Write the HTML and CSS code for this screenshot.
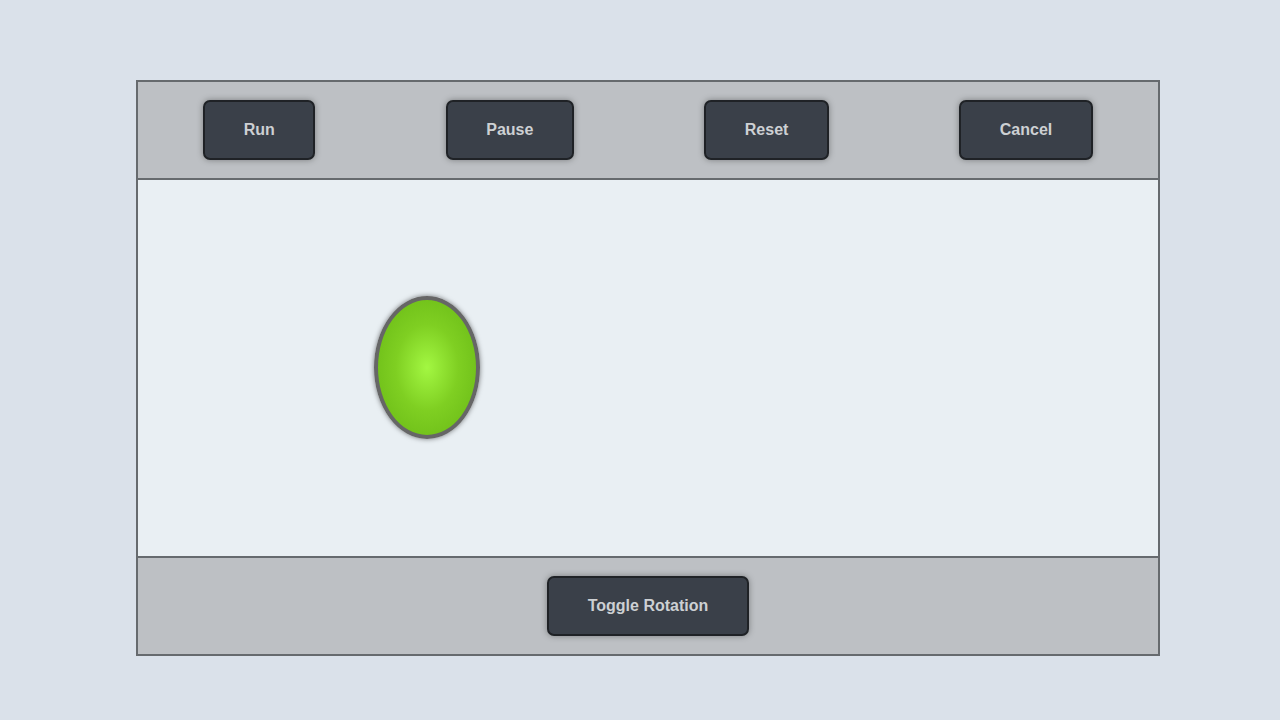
FILE: index.html
```html
<!DOCTYPE html>
<html>
<head>
<meta charset="utf-8">
<link rel="stylesheet" href="styles.css">
</head>
<body>
<div class="frame">
  <div class="bar top">
    <button class="btn">Run</button>
    <button class="btn">Pause</button>
    <button class="btn">Reset</button>
    <button class="btn">Cancel</button>
  </div>
  <div class="stage">
    <div class="ball"></div>
  </div>
  <div class="bar bottom">
    <button class="btn">Toggle Rotation</button>
  </div>
</div>
</body>
</html>
```
FILE: styles.css
```css
html, body {
  margin: 0;
  padding: 0;
}
body {
  background: #dae1ea;
  width: 1280px;
  height: 720px;
  padding-top: 80px;
  box-sizing: border-box;
  font-family: "Liberation Sans", Arial, sans-serif;
}
.frame {
  width: 1024px;
  margin: 0 0 0 136px;
  border: 2px solid #666a6e;
  box-sizing: border-box;
  display: flex;
  flex-direction: column;
}
.bar {
  height: 96px;
  background: #bdc0c4;
  display: flex;
  align-items: center;
}
.top {
  justify-content: space-around;
  border-bottom: 2px solid #666a6e;
}
.bottom {
  justify-content: center;
  border-top: 2px solid #666a6e;
}
.btn {
  height: 60px;
  padding: 0 38.5px;
  background: #3a4049;
  color: #cdd0d3;
  border: 2px solid #1f2226;
  border-radius: 7px;
  font-family: "Liberation Sans", Arial, sans-serif;
  font-weight: bold;
  font-size: 16px;
  box-shadow: 0 0 6px rgba(0, 0, 0, 0.35);
}
.stage {
  position: relative;
  height: 376px;
  background: #e9eff3;
}
.ball {
  position: absolute;
  left: 236px;
  top: 116px;
  width: 98px;
  height: 135px;
  border: 4px solid #666666;
  border-radius: 50%;
  background: radial-gradient(ellipse at center, #a3f742 0%, #7fcf22 45%, #66b614 100%);
  box-shadow: 0 0 5px rgba(0, 0, 0, 0.5);
}
```
